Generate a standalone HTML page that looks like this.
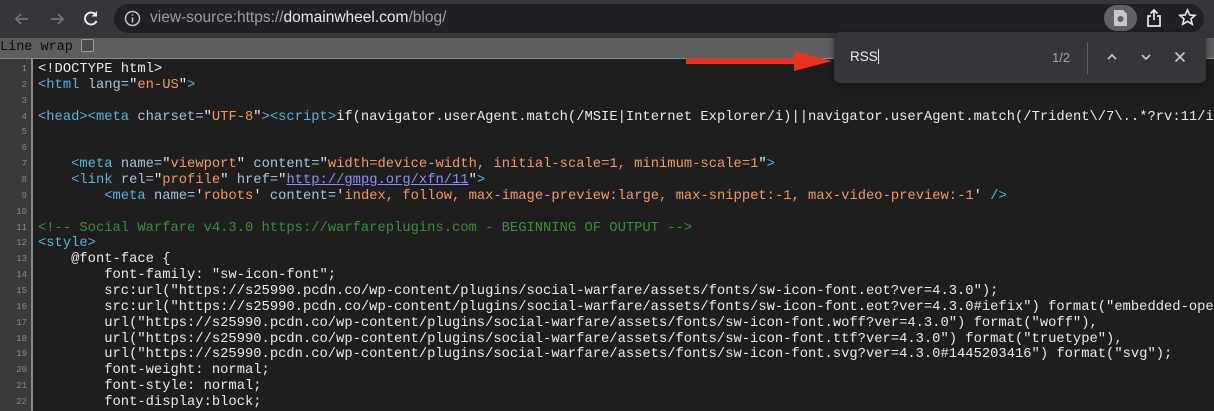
<!DOCTYPE html>
<html><head><meta charset="utf-8"><style>
body{margin:0;width:1214px;height:411px;overflow:hidden;background:#1e1e1e;font-family:"Liberation Sans",sans-serif;position:relative}
.top{position:absolute;left:0;top:0;width:1214px;height:38px;background:#35363a}
.omni{position:absolute;left:114px;top:4px;width:1090px;height:29px;border-radius:15px;background:#202124}
.url{position:absolute;left:150px;top:9px;font-size:15.5px;color:#9aa0a6}
.url b{color:#e8eaed;font-weight:normal}
.lw{position:absolute;left:0;top:38px;width:1214px;height:20px;background:#5d5d5d;border-bottom:1px solid #888;font-family:"Liberation Mono",monospace;font-size:13.5px;color:#0c0c0c;line-height:20px}
.cb{display:inline-block;width:11px;height:11px;border:1px solid #999;border-radius:2px;vertical-align:-2px;background:#4a4a4a}
.gut{position:absolute;left:0;top:59px;width:31px;height:352px;background:#3a3a3a;border-right:2px solid #8a8a8a}
.code{position:absolute;left:0;top:62px;width:1214px;height:349px;overflow:hidden;font-family:"Liberation Mono",monospace;font-size:13.8px;color:#e8eaed;white-space:pre}
.code>div{height:15.86px;line-height:15.86px;position:relative;padding-left:38px}
.ln{position:absolute;left:0;top:0;width:27px;text-align:right;font-size:9px;color:#8a8a8a}
.t{color:#5db0d7}.a{color:#a8c0dc}.v{color:#f29766}.c{color:#3d8b3d}.k{color:#8c8cff;text-decoration:underline}
.find{position:absolute;left:834px;top:32px;width:372px;height:51px;background:#35363a;border-radius:6px;box-shadow:0 2px 6px rgba(0,0,0,.5)}
</style></head><body>
<div class="top">
<svg style="position:absolute;left:12px;top:9px" width="20" height="20" viewBox="0 0 20 20" fill="none" stroke="#6f7276" stroke-width="1.8"><path d="M16 10H4M9 5L4 10L9 15"/></svg>
<svg style="position:absolute;left:47px;top:9px" width="20" height="20" viewBox="0 0 20 20" fill="none" stroke="#6f7276" stroke-width="1.8"><path d="M4 10H16M11 5L16 10L11 15"/></svg>
<svg style="position:absolute;left:81px;top:8px" width="20" height="20" viewBox="0 0 20 20" fill="none" stroke="#e8eaed" stroke-width="2"><path d="M15.5 8A6 6 0 1 0 15.5 13"/><path d="M16 3L16 8.5L10.5 8.5Z" fill="#e8eaed" stroke="none"/></svg>
<div class="omni"></div>
<svg style="position:absolute;left:124px;top:10px" width="17" height="17" viewBox="0 0 17 17" fill="none" stroke="#c4c7c5" stroke-width="1.5"><circle cx="8.5" cy="8.5" r="7"/><path d="M8.5 7.5V12.5M8.5 4.5V5.8"/></svg>
<div class="url">view-source:https://<b>domainwheel.com</b>/blog/</div>
<div style="position:absolute;left:1104px;top:5px;width:33px;height:26px;border-radius:13px;background:#5f6368"></div>
<svg style="position:absolute;left:1113px;top:9px" width="15" height="18" viewBox="0 0 15 18" fill="#c8c8c8"><path d="M1 1H10L14 5V17H1Z"/><circle cx="7.5" cy="10" r="3" fill="#5f6368"/></svg>
<svg style="position:absolute;left:1145px;top:8px" width="18" height="20" viewBox="0 0 18 20" fill="none" stroke="#e8eaed" stroke-width="1.7"><path d="M6 8H3V18H15V8H12M9 12V2M5.5 5.5L9 2L12.5 5.5"/></svg>
<svg style="position:absolute;left:1178px;top:8px" width="19" height="19" viewBox="0 0 24 24" fill="none" stroke="#e8eaed" stroke-width="2"><path d="M12 2.5L14.8 8.8L21.5 9.3L16.4 13.8L18 20.5L12 17L6 20.5L7.6 13.8L2.5 9.3L9.2 8.8Z"/></svg>
</div>
<div class="lw">Line wrap <span class="cb"></span></div>
<div class="gut"></div>
<div class="code"><div><span class="ln">1</span>&lt;!DOCTYPE html&gt;</div><div><span class="ln">2</span><span class="t">&lt;html </span><span class="a">lang=</span>"<span class="v">en-US</span>"<span class="t">&gt;</span></div><div><span class="ln">3</span></div><div><span class="ln">4</span><span class="t">&lt;head&gt;&lt;meta </span><span class="a">charset=</span>"<span class="v">UTF-8</span>"<span class="t">&gt;&lt;script&gt;</span>if(navigator.userAgent.match(/MSIE|Internet Explorer/i)||navigator.userAgent.match(/Trident\/7\..*?rv:11/i)</div><div><span class="ln">5</span></div><div><span class="ln">6</span></div><div><span class="ln">7</span>    <span class="t">&lt;meta </span><span class="a">name=</span>"<span class="v">viewport</span>" <span class="a">content=</span>"<span class="v">width=device-width, initial-scale=1, minimum-scale=1</span>"<span class="t">&gt;</span></div><div><span class="ln">8</span>    <span class="t">&lt;link </span><span class="a">rel=</span>"<span class="v">profile</span>" <span class="a">href=</span>"<span class="k">http://gmpg.org/xfn/11</span>"<span class="t">&gt;</span></div><div><span class="ln">9</span>        <span class="t">&lt;meta </span><span class="a">name=</span>'<span class="v">robots</span>' <span class="a">content=</span>'<span class="v">index, follow, max-image-preview:large, max-snippet:-1, max-video-preview:-1</span>' <span class="t">/&gt;</span></div><div><span class="ln">10</span></div><div><span class="ln">11</span><span class="c">&lt;!-- Social Warfare v4.3.0 https://warfareplugins.com - BEGINNING OF OUTPUT --&gt;</span></div><div><span class="ln">12</span><span class="t">&lt;style&gt;</span></div><div><span class="ln">13</span>    @font-face {</div><div><span class="ln">14</span>        font-family: "sw-icon-font";</div><div><span class="ln">15</span>        src:url("https://s25990.pcdn.co/wp-content/plugins/social-warfare/assets/fonts/sw-icon-font.eot?ver=4.3.0");</div><div><span class="ln">16</span>        src:url("https://s25990.pcdn.co/wp-content/plugins/social-warfare/assets/fonts/sw-icon-font.eot?ver=4.3.0#iefix") format("embedded-opentype"),</div><div><span class="ln">17</span>        url("https://s25990.pcdn.co/wp-content/plugins/social-warfare/assets/fonts/sw-icon-font.woff?ver=4.3.0") format("woff"),</div><div><span class="ln">18</span>        url("https://s25990.pcdn.co/wp-content/plugins/social-warfare/assets/fonts/sw-icon-font.ttf?ver=4.3.0") format("truetype"),</div><div><span class="ln">19</span>        url("https://s25990.pcdn.co/wp-content/plugins/social-warfare/assets/fonts/sw-icon-font.svg?ver=4.3.0#1445203416") format("svg");</div><div><span class="ln">20</span>        font-weight: normal;</div><div><span class="ln">21</span>        font-style: normal;</div><div><span class="ln">22</span>        font-display:block;</div></div>
<svg style="position:absolute;left:686px;top:46px" width="150" height="30" viewBox="0 0 150 30"><path d="M0 12H108V5L146 15L108 25V18H0Z" fill="#e8321f"/></svg>
<div class="find">
<div style="position:absolute;left:16px;top:17px;font-size:13.5px;color:#e8eaed">RSS<span style="display:inline-block;width:1px;height:15px;background:#e8eaed;vertical-align:-3px"></span></div>
<div style="position:absolute;left:218px;top:18px;font-size:13px;color:#9aa0a6">1/2</div>
<div style="position:absolute;left:253px;top:10px;width:1px;height:32px;background:#5f6368"></div>
<svg style="position:absolute;left:272px;top:19px" width="12" height="12" viewBox="0 0 12 12" fill="none" stroke="#c8c8c8" stroke-width="1.6"><path d="M2 8L6 4L10 8"/></svg>
<svg style="position:absolute;left:306px;top:19px" width="12" height="12" viewBox="0 0 12 12" fill="none" stroke="#c8c8c8" stroke-width="1.6"><path d="M2 4L6 8L10 4"/></svg>
<svg style="position:absolute;left:340px;top:19px" width="12" height="12" viewBox="0 0 12 12" fill="none" stroke="#c8c8c8" stroke-width="1.6"><path d="M1.5 1.5L10.5 10.5M10.5 1.5L1.5 10.5"/></svg>
</div>
</body></html>
